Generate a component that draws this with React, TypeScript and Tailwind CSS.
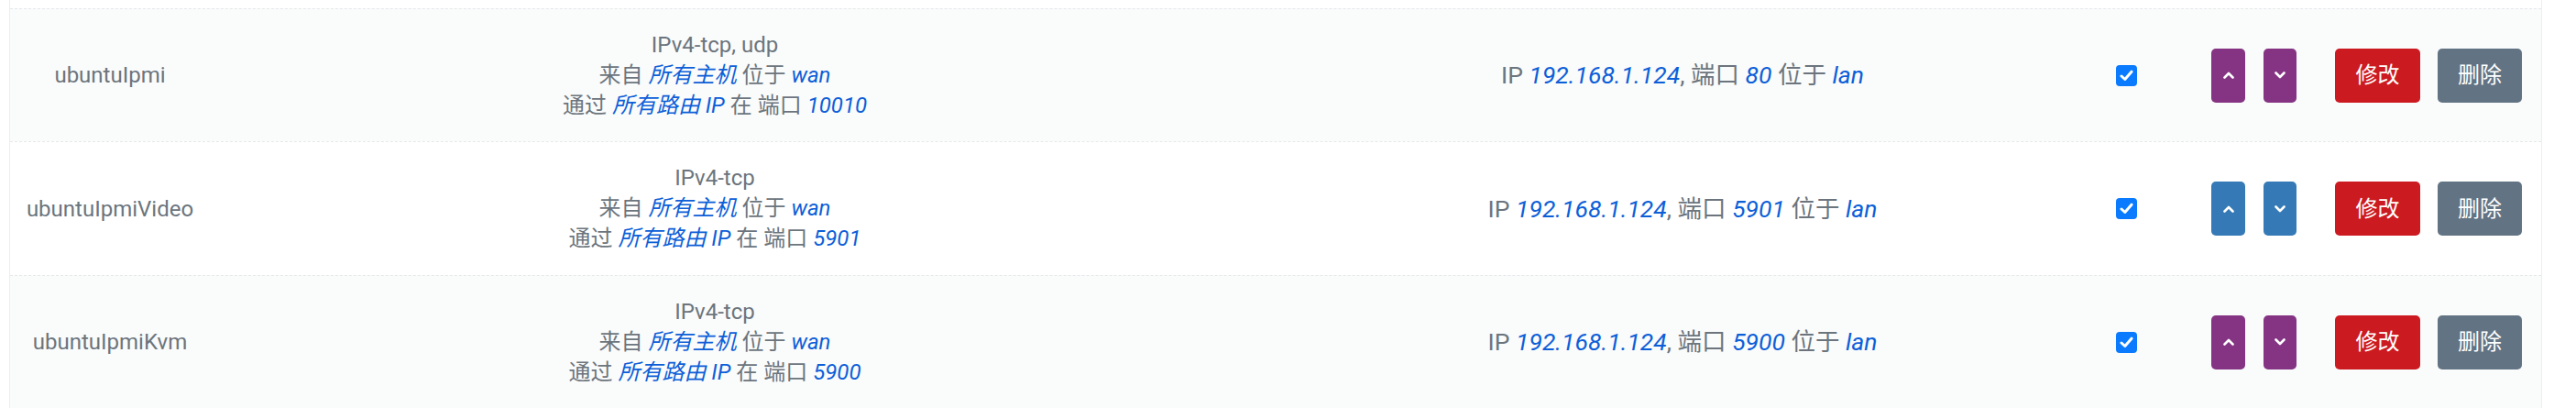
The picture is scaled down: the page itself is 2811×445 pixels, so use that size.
import React from "react";

type Rule = {
  name: string;
  proto: string;
  port: string;
  destPort: string;
  moveColor: string;
  striped: boolean;
};

const RULES: Rule[] = [
  { name: "ubuntuIpmi", proto: "IPv4-tcp, udp", port: "10010", destPort: "80", moveColor: "bg-[#843482]", striped: true },
  { name: "ubuntuIpmiVideo", proto: "IPv4-tcp", port: "5901", destPort: "5901", moveColor: "bg-[#357ab6]", striped: false },
  { name: "ubuntuIpmiKvm", proto: "IPv4-tcp", port: "5900", destPort: "5900", moveColor: "bg-[#843482]", striped: true },
];

function Em({ children }: { children: React.ReactNode }) {
  return <em className="italic text-[#0d5fd8]">{children}</em>;
}

function Chevron({ up }: { up: boolean }) {
  return (
    <svg width="12" height="8" viewBox="0 0 12 8" fill="none">
      <polyline
        points={up ? "1.5,6.5 6,2 10.5,6.5" : "1.5,1.5 6,6 10.5,1.5"}
        stroke="white"
        strokeWidth="2.6"
        strokeLinecap="round"
        strokeLinejoin="round"
      />
    </svg>
  );
}

function Checkbox() {
  return (
    <div className="w-[23px] h-[23px] rounded-[4px] bg-[#0a7bff] flex items-center justify-center">
      <svg width="15" height="13" viewBox="0 0 15 13" fill="none">
        <polyline points="2,7 5.8,10.5 13,2.2" stroke="white" strokeWidth="3" strokeLinecap="round" strokeLinejoin="round" />
      </svg>
    </div>
  );
}

function Row({ rule, height }: { rule: Rule; height: string }) {
  return (
    <div
      className={`grid grid-cols-[218px_1102px_958px_62px_1fr] items-center border-t border-dashed border-[#e6e8ea] ${height} ${
        rule.striped ? "bg-[#fafbfb]" : "bg-white"
      }`}
    >
      <div className="text-center">{rule.name}</div>
      <div className="text-center leading-[33px]">
        <div>{rule.proto}</div>
        <div>
          来自 <Em>所有主机</Em> 位于 <Em>wan</Em>
        </div>
        <div>
          通过 <Em>所有路由 IP</Em> 在 端口 <Em>{rule.port}</Em>
        </div>
      </div>
      <div className="pl-[52px] text-center text-[26.5px]">
        IP <Em>192.168.1.124</Em>, 端口 <Em>{rule.destPort}</Em> 位于 <Em>lan</Em>
      </div>
      <div className="flex justify-center">
        <Checkbox />
      </div>
      <div className="flex items-center pl-[62px]">
        <button className={`w-[37px] h-[59px] rounded-[5px] flex items-center justify-center ${rule.moveColor}`}>
          <Chevron up />
        </button>
        <button className={`ml-[20px] w-[36px] h-[59px] rounded-[5px] flex items-center justify-center ${rule.moveColor}`}>
          <Chevron up={false} />
        </button>
        <button className="ml-[42px] w-[93px] h-[59px] rounded-[5px] bg-[#cc1a21] text-white text-[24px]">修改</button>
        <button className="ml-[19px] w-[92px] h-[59px] rounded-[5px] bg-[#627384] text-white text-[24px]">删除</button>
      </div>
    </div>
  );
}

export default function App() {
  return (
    <div
      className="w-[2811px] h-[445px] overflow-hidden bg-white text-[24px] text-[#6c757d]"
      style={{ fontFamily: "Roboto, 'Noto Sans CJK SC', sans-serif" }}
    >
      <div className="ml-[10px] w-[2764px] h-[445px] border-l border-r border-[#eceef0]">
        <div className="h-[9px]" />
        <Row rule={RULES[0]} height="h-[145px]" />
        <Row rule={RULES[1]} height="h-[146px]" />
        <Row rule={RULES[2]} height="h-[145px]" />
      </div>
    </div>
  );
}
